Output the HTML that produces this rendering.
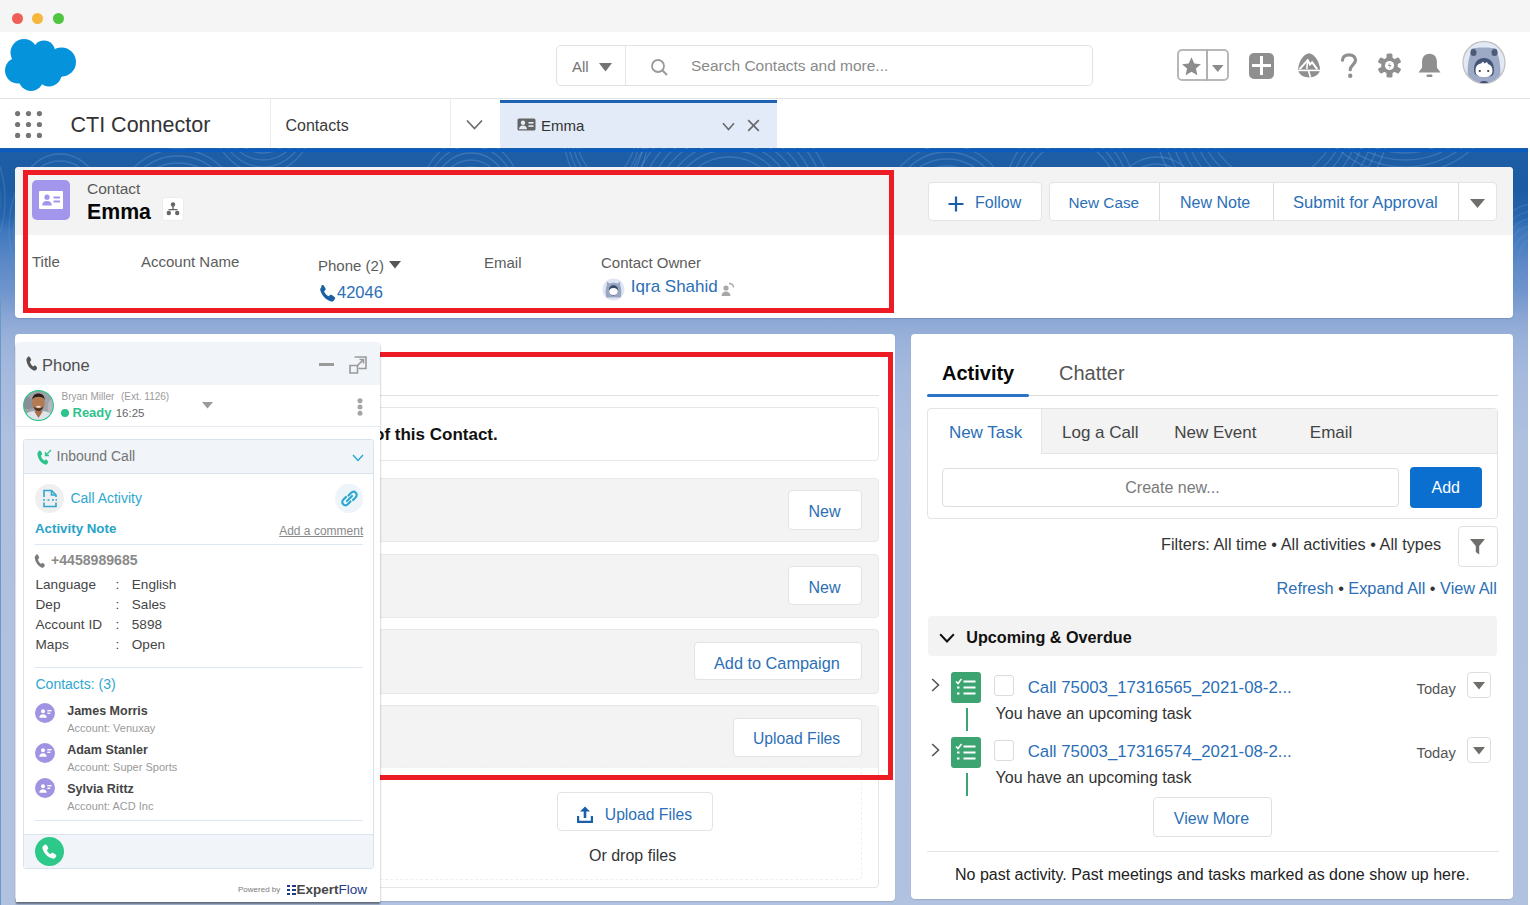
<!DOCTYPE html>
<html><head><meta charset="utf-8">
<style>
*{box-sizing:border-box;margin:0;padding:0}
html,body{width:1530px;height:905px;overflow:hidden;background:#fff}
body{position:relative;font-family:"Liberation Sans",sans-serif;color:#3e3e3c}
.a{position:absolute}
.t{position:absolute;line-height:1;white-space:nowrap}
.lk{color:#2b6fb6}
.bx{position:absolute;border:1px solid #e3e3e3;border-radius:4px;background:#fff}
</style></head><body>

<!-- window chrome -->
<div class="a" style="left:0;top:0;width:1530px;height:32px;background:#f5f5f5"></div>
<div class="a" style="left:12px;top:12.5px;width:11px;height:11px;border-radius:50%;background:#ef5f57"></div>
<div class="a" style="left:32px;top:12.5px;width:11px;height:11px;border-radius:50%;background:#f6b73b"></div>
<div class="a" style="left:52.5px;top:12.5px;width:11px;height:11px;border-radius:50%;background:#4ec640"></div>

<!-- header -->
<div class="a" style="left:0;top:98px;width:1530px;height:1px;background:#e3e3e3"></div>
<svg class="a" style="left:4px;top:37px" width="74" height="56" viewBox="0 0 74 56">
 <g fill="#0593dc">
  <circle cx="20" cy="15.5" r="13.5"/><circle cx="40" cy="14.5" r="11"/><circle cx="57.5" cy="25" r="14.5"/>
  <circle cx="14" cy="33.5" r="13"/><circle cx="27" cy="41.5" r="12.5"/><circle cx="45" cy="37" r="12.5"/>
  <rect x="14" y="18" width="44" height="22"/>
 </g>
</svg>

<!-- search -->
<div class="bx" style="left:556px;top:45px;width:537px;height:41px;border-color:#e2e2e2;border-radius:5px"></div>
<div class="a" style="left:625px;top:46px;width:1px;height:39px;background:#e5e5e5"></div>
<div class="t" style="left:572px;top:58.5px;font-size:15px;color:#747474">All</div>
<svg class="a" style="left:599px;top:63px" width="13" height="9"><path d="M0 0H13L6.5 8.5Z" fill="#747474"/></svg>
<svg class="a" style="left:650px;top:58px" width="19" height="19" viewBox="0 0 19 19"><circle cx="8" cy="8" r="6" fill="none" stroke="#9a9a9a" stroke-width="1.8"/><path d="M12.5 12.5L17 17" stroke="#9a9a9a" stroke-width="2"/></svg>
<div class="t" style="left:691px;top:58.2px;font-size:15.5px;color:#8a8a8a">Search Contacts and more...</div>

<!-- header icons -->
<div class="bx" style="left:1177px;top:49px;width:52px;height:32px;border:2px solid #b8b8b8;border-radius:5px;background:#fff"></div>
<div class="a" style="left:1205.5px;top:49px;width:2px;height:32px;background:#b0b0b0"></div>
<svg class="a" style="left:1181px;top:55.5px" width="21" height="21" viewBox="0 0 24 24"><path d="M12 1.5l3.2 7 7.6.8-5.7 5.1 1.6 7.5L12 18l-6.7 3.9 1.6-7.5L1.2 9.3l7.6-.8z" fill="#8c8c8c"/></svg>
<svg class="a" style="left:1212px;top:65px" width="12" height="8"><path d="M0 0H11.5L5.75 7Z" fill="#8c8c8c"/></svg>
<div class="a" style="left:1248.5px;top:52.5px;width:25.5px;height:26px;border-radius:5px;background:#8f8f8f"></div>
<div class="a" style="left:1260px;top:56px;width:2.5px;height:19px;background:#fff"></div>
<div class="a" style="left:1252px;top:64.3px;width:19px;height:2.5px;background:#fff"></div>
<svg class="a" style="left:1297px;top:53px" width="24" height="25" viewBox="0 0 24 25">
 <path d="M12 0.3C6 1.5 1.8 8 1 17.2 2.5 22 7 24.4 12 24.4S21.5 22 23.2 17.2C22.2 8 18 1.5 12 0.3Z" fill="#8f8f8f"/>
 <path d="M2.6 16.2L10.7 7.2 13 11.5 15.1 9.3 20.2 16.2" fill="none" stroke="#fff" stroke-width="2"/>
 <path d="M10.7 7.2L9.8 16" stroke="#fff" stroke-width="1.6"/>
 <path d="M0 17.4H24" stroke="#fff" stroke-width="1.6"/><path d="M11.5 17.8L13.5 24.5" stroke="#fff" stroke-width="1.6" fill="none"/>
</svg>
<svg class="a" style="left:1340px;top:53px" width="18" height="26" viewBox="0 0 18 26"><path d="M2.5 7.2C2.5 3.8 5.3 1.8 9 1.8s6.5 2.2 6.5 5.4c0 4.3-5.3 5-5.3 9.5" fill="none" stroke="#8f8f8f" stroke-width="3.2" stroke-linecap="round"/><circle cx="10.2" cy="22.8" r="2.2" fill="#8f8f8f"/></svg>
<svg class="a" style="left:1378px;top:53px" width="23" height="25" viewBox="0 0 23 25">
 <g fill="#8f8f8f" transform="translate(11.5 12.5)">
  <circle r="8.3"/>
  <rect x="-3" y="-12" width="6" height="6" rx="1.5"/>
  <rect x="-3" y="-12" width="6" height="6" rx="1.5" transform="rotate(60)"/>
  <rect x="-3" y="-12" width="6" height="6" rx="1.5" transform="rotate(120)"/>
  <rect x="-3" y="-12" width="6" height="6" rx="1.5" transform="rotate(180)"/>
  <rect x="-3" y="-12" width="6" height="6" rx="1.5" transform="rotate(240)"/>
  <rect x="-3" y="-12" width="6" height="6" rx="1.5" transform="rotate(300)"/>
 </g>
 <circle cx="11.5" cy="12.5" r="4.6" fill="#fff"/>
 <path d="M12.5 9L9.8 13H12L10.8 16.2 13.5 12H11.3Z" fill="#8f8f8f"/>
</svg>
<svg class="a" style="left:1418px;top:53px" width="23" height="25" viewBox="0 0 23 25"><path d="M11.5 0.8c-4.8 0-7.4 3.6-7.4 8v5.8L0.5 19.5h22l-3.6-4.9V8.8c0-4.4-2.6-8-7.4-8z" fill="#8f8f8f"/><rect x="8.5" y="21.5" width="6" height="2.5" rx="1.2" fill="#8f8f8f"/></svg>
<svg class="a" style="left:1462px;top:40px" width="44" height="45" viewBox="0 0 44 45">
 <defs><clipPath id="tav"><circle cx="22" cy="22.5" r="20.5"/></clipPath></defs>
 <circle cx="22" cy="22.5" r="21" fill="#e3e9f4" stroke="#c4c4c8" stroke-width="1.4"/>
 <g clip-path="url(#tav)">
 <path d="M7 45C5 36 5 24 8 15L9 9C13 7 31 7 35 9L36 15C39 24 39 36 37 45Z" fill="#9daac6"/>
 <ellipse cx="11.5" cy="12.5" rx="3" ry="3.6" fill="#4d5a78"/><ellipse cx="32.5" cy="12.5" rx="3" ry="3.6" fill="#4d5a78"/>
 <path d="M12 30C12 22 16 18 22 18S32 22 32 30 28 36 22 36 12 36 12 30Z" fill="#44557a"/>
 <path d="M13.5 31C13.5 26 16 24 19 23.5L21 21.5 22.5 23.5 25 22 26 24C29 25 30.5 27 30.5 31 30.5 35 27 37 22 37S13.5 35 13.5 31Z" fill="#fff"/>
 <circle cx="17.8" cy="31" r="1.1" fill="#333"/><circle cx="26.2" cy="31" r="1.1" fill="#333"/>
 <ellipse cx="22" cy="44" rx="4.5" ry="3" fill="#3e4a66"/>
 </g>
</svg>

<!-- nav bar -->
<div class="a" style="left:15px;top:111px;width:27px;height:27px">
 <svg width="27" height="27" viewBox="0 0 27 27" fill="#757575">
  <circle cx="2.6" cy="2.6" r="2.6"/><circle cx="13.5" cy="2.6" r="2.6"/><circle cx="24.4" cy="2.6" r="2.6"/>
  <circle cx="2.6" cy="13.5" r="2.6"/><circle cx="13.5" cy="13.5" r="2.6"/><circle cx="24.4" cy="13.5" r="2.6"/>
  <circle cx="2.6" cy="24.4" r="2.6"/><circle cx="13.5" cy="24.4" r="2.6"/><circle cx="24.4" cy="24.4" r="2.6"/>
 </svg>
</div>
<div class="t" style="left:70.5px;top:114.8px;font-size:21.5px;color:#333">CTI Connector</div>
<div class="a" style="left:269.5px;top:99px;width:1px;height:48px;background:#ececec"></div>
<div class="t" style="left:285.5px;top:117.5px;font-size:16px;color:#3a3a3a">Contacts</div>
<div class="a" style="left:449.5px;top:99px;width:1px;height:48px;background:#ececec"></div>
<svg class="a" style="left:466px;top:119px" width="17" height="12"><path d="M1 1.5L8.5 9.5 16 1.5" fill="none" stroke="#6f6f6f" stroke-width="1.8"/></svg>
<div class="a" style="left:500px;top:100px;width:277px;height:48px;background:#e2ebf7;border-top:3px solid #1f63b0"></div>
<svg class="a" style="left:516.5px;top:117.5px" width="19" height="13" viewBox="0 0 19 13"><rect x="0.5" y="0.5" width="18" height="12" rx="1.5" fill="#646464"/><circle cx="6" cy="4.8" r="2.2" fill="#e2ebf7"/><path d="M2 11.2c0-2.5 1.8-3.8 4-3.8s4 1.3 4 3.8z" fill="#e2ebf7"/><rect x="11.5" y="4" width="5" height="1.6" fill="#e2ebf7"/><rect x="11.5" y="7.3" width="5" height="1.6" fill="#e2ebf7"/></svg>
<div class="t" style="left:541px;top:118.3px;font-size:15px;color:#333">Emma</div>
<svg class="a" style="left:721.5px;top:121.5px" width="13" height="9"><path d="M1 1.2L6.5 7.5 12 1.2" fill="none" stroke="#6a6a6a" stroke-width="1.6"/></svg>
<svg class="a" style="left:746.5px;top:118.5px" width="13" height="13"><path d="M1.2 1.2L11.8 11.8M11.8 1.2L1.2 11.8" stroke="#6a6a6a" stroke-width="1.7"/></svg>

<!-- BACKGROUND -->
<div class="a" style="left:0;top:148px;width:1528px;height:757px;background:linear-gradient(to bottom,#1d5ea6 0px,#1c5ca3 40px,#2766ad 70px,#3f78bd 83px,#5b88c6 113px,#6f95cc 143px,#8da8d6 172px,#9ab2da 192px,#a6bade 229px,#b0c1e0 299px,#b1c2e0 757px)"></div>
<div class="a" style="left:0;top:300px;width:1px;height:605px;background:#6a98c8"></div>
<svg class="a" style="left:0;top:148px" width="1528" height="190" viewBox="0 148 1528 190"><defs><linearGradient id="fadeg" x1="0" y1="0" x2="0" y2="1"><stop offset="0" stop-color="#fff" stop-opacity="1"/><stop offset="1" stop-color="#fff" stop-opacity="0"/></linearGradient><mask id="fm"><rect x="0" y="148" width="1528" height="190" fill="url(#fadeg)"/></mask></defs><g fill="none" stroke="#8fb4e6" stroke-opacity="0.28" stroke-width="1.3" mask="url(#fm)"><ellipse cx="-47" cy="200" rx="23" ry="34"/><ellipse cx="-47" cy="200" rx="28" ry="41"/><ellipse cx="-47" cy="200" rx="33" ry="48"/><ellipse cx="-47" cy="200" rx="37" ry="55"/><ellipse cx="-47" cy="200" rx="42" ry="62"/><ellipse cx="-47" cy="200" rx="47" ry="69"/><ellipse cx="-47" cy="200" rx="52" ry="76"/><ellipse cx="60" cy="230" rx="32" ry="48"/><ellipse cx="60" cy="230" rx="37" ry="55"/><ellipse cx="60" cy="230" rx="42" ry="62"/><ellipse cx="60" cy="230" rx="46" ry="69"/><ellipse cx="60" cy="230" rx="51" ry="76"/><ellipse cx="178" cy="230" rx="27" ry="32"/><ellipse cx="178" cy="230" rx="33" ry="39"/><ellipse cx="178" cy="230" rx="39" ry="46"/><ellipse cx="178" cy="230" rx="45" ry="53"/><ellipse cx="178" cy="230" rx="51" ry="60"/><ellipse cx="178" cy="230" rx="57" ry="67"/><ellipse cx="178" cy="230" rx="63" ry="74"/><ellipse cx="178" cy="230" rx="69" ry="81"/><ellipse cx="263" cy="90" rx="35" ry="49"/><ellipse cx="263" cy="90" rx="39" ry="56"/><ellipse cx="263" cy="90" rx="44" ry="63"/><ellipse cx="263" cy="90" rx="49" ry="70"/><ellipse cx="263" cy="90" rx="54" ry="77"/><ellipse cx="263" cy="90" rx="59" ry="84"/><ellipse cx="358" cy="90" rx="20" ry="25"/><ellipse cx="358" cy="90" rx="25" ry="32"/><ellipse cx="358" cy="90" rx="31" ry="39"/><ellipse cx="358" cy="90" rx="36" ry="46"/><ellipse cx="471" cy="200" rx="22" ry="26"/><ellipse cx="471" cy="200" rx="28" ry="33"/><ellipse cx="471" cy="200" rx="34" ry="40"/><ellipse cx="471" cy="200" rx="40" ry="47"/><ellipse cx="471" cy="200" rx="46" ry="54"/><ellipse cx="471" cy="200" rx="51" ry="61"/><ellipse cx="606" cy="120" rx="32" ry="58"/><ellipse cx="606" cy="120" rx="36" ry="65"/><ellipse cx="606" cy="120" rx="40" ry="72"/><ellipse cx="606" cy="120" rx="44" ry="79"/><ellipse cx="729" cy="200" rx="48" ry="43"/><ellipse cx="729" cy="200" rx="56" ry="50"/><ellipse cx="729" cy="200" rx="63" ry="57"/><ellipse cx="729" cy="200" rx="71" ry="64"/><ellipse cx="729" cy="200" rx="79" ry="71"/><ellipse cx="729" cy="200" rx="87" ry="78"/><ellipse cx="729" cy="200" rx="95" ry="85"/><ellipse cx="729" cy="200" rx="102" ry="92"/><ellipse cx="840" cy="260" rx="25" ry="34"/><ellipse cx="840" cy="260" rx="30" ry="41"/><ellipse cx="840" cy="260" rx="35" ry="48"/><ellipse cx="840" cy="260" rx="41" ry="55"/><ellipse cx="840" cy="260" rx="46" ry="62"/><ellipse cx="840" cy="260" rx="51" ry="69"/><ellipse cx="947" cy="230" rx="35" ry="43"/><ellipse cx="947" cy="230" rx="41" ry="50"/><ellipse cx="947" cy="230" rx="47" ry="57"/><ellipse cx="947" cy="230" rx="53" ry="64"/><ellipse cx="947" cy="230" rx="58" ry="71"/><ellipse cx="947" cy="230" rx="64" ry="78"/><ellipse cx="947" cy="230" rx="70" ry="85"/><ellipse cx="1070" cy="200" rx="48" ry="58"/><ellipse cx="1070" cy="200" rx="54" ry="65"/><ellipse cx="1070" cy="200" rx="60" ry="72"/><ellipse cx="1070" cy="200" rx="66" ry="79"/><ellipse cx="1157" cy="200" rx="22" ry="22"/><ellipse cx="1157" cy="200" rx="29" ry="29"/><ellipse cx="1157" cy="200" rx="36" ry="36"/><ellipse cx="1157" cy="200" rx="43" ry="43"/><ellipse cx="1272" cy="120" rx="64" ry="60"/><ellipse cx="1272" cy="120" rx="72" ry="67"/><ellipse cx="1272" cy="120" rx="79" ry="74"/><ellipse cx="1272" cy="120" rx="87" ry="81"/><ellipse cx="1272" cy="120" rx="94" ry="88"/><ellipse cx="1272" cy="120" rx="102" ry="95"/><ellipse cx="1272" cy="120" rx="109" ry="102"/><ellipse cx="1272" cy="120" rx="117" ry="109"/><ellipse cx="1405" cy="90" rx="55" ry="49"/><ellipse cx="1405" cy="90" rx="62" ry="56"/><ellipse cx="1405" cy="90" rx="70" ry="63"/><ellipse cx="1405" cy="90" rx="78" ry="70"/><ellipse cx="1405" cy="90" rx="86" ry="77"/><ellipse cx="1405" cy="90" rx="94" ry="84"/><ellipse cx="1535" cy="260" rx="17" ry="21"/><ellipse cx="1535" cy="260" rx="23" ry="28"/><ellipse cx="1535" cy="260" rx="29" ry="35"/><ellipse cx="1535" cy="260" rx="34" ry="42"/><ellipse cx="1535" cy="260" rx="40" ry="49"/><ellipse cx="1535" cy="260" rx="46" ry="56"/></g></svg>
<div class="a" style="left:0;top:148.5px;width:1528px;height:3px;background:#0b5cbf"></div>


<!-- HEADER CARD -->
<div class="a" style="left:15px;top:167px;width:1498px;height:151px;background:#fff;border-radius:4px;overflow:hidden;box-shadow:0 1px 1px rgba(0,0,0,.12)">
 <div class="a" style="left:0;top:0;width:1498px;height:68px;background:#f3f3f3"></div>
</div>
<div class="a" style="left:32px;top:180px;width:38px;height:40px;border-radius:5px;background:#a196ec"></div>
<svg class="a" style="left:39px;top:190.5px" width="24" height="18" viewBox="0 0 24 18"><rect width="24" height="18" rx="1" fill="#fff"/><circle cx="8" cy="6.2" r="2.6" fill="#a196ec"/><path d="M3.2 14.5c0-3.2 2.2-4.6 4.8-4.6s4.8 1.4 4.8 4.6z" fill="#a196ec"/><rect x="14.5" y="5.5" width="6.5" height="2" fill="#a196ec"/><rect x="14.5" y="9.5" width="6.5" height="2" fill="#a196ec"/></svg>
<div class="t" style="left:87px;top:181.3px;font-size:15.5px;color:#5a5a5a">Contact</div>
<div class="t" style="left:87px;top:201.5px;font-size:21.3px;font-weight:bold;color:#080707">Emma</div>
<div class="a" style="left:162px;top:197px;width:22px;height:24px;border-radius:3px;background:#fff;border:1px solid #ededed"></div>
<svg class="a" style="left:166px;top:202px" width="14" height="14" viewBox="0 0 14 14" fill="#666"><circle cx="7" cy="2.5" r="2.2"/><rect x="6.3" y="4" width="1.4" height="4"/><rect x="2.5" y="7" width="9" height="1.3"/><circle cx="2.8" cy="11" r="2.2"/><circle cx="11.2" cy="11" r="2.2"/></svg>

<div class="t" style="left:32px;top:254.3px;font-size:15px;color:#5c5c5c">Title</div>
<div class="t" style="left:141px;top:254.3px;font-size:15px;color:#5c5c5c">Account Name</div>
<div class="t" style="left:318px;top:257.8px;font-size:15px;color:#5c5c5c">Phone (2)</div>
<svg class="a" style="left:388.5px;top:261px" width="12" height="8"><path d="M0 0H12L6 7.5Z" fill="#555"/></svg>
<svg class="a" style="left:318px;top:283.5px" width="18" height="18" viewBox="0 0 18 18"><path d="M3.6 1.2c.8-.5 1.7-.3 2.2.4l1.6 2.6c.5.8.3 1.7-.4 2.2l-1 .8c.9 2.1 2.6 4 4.8 5.1l.9-1c.6-.6 1.5-.7 2.2-.2l2.6 1.8c.7.5.9 1.5.4 2.2l-1 1.5c-.6.9-1.7 1.3-2.7 1-5.4-1.7-9.4-6-10.9-11.3-.3-1 .1-2.1.9-2.7z" fill="#1c5fa4"/></svg>
<div class="t" style="left:337px;top:283.5px;font-size:16.5px;color:#2b6fb6">42046</div>
<div class="t" style="left:484px;top:254.8px;font-size:15px;color:#5c5c5c">Email</div>
<div class="t" style="left:601px;top:254.8px;font-size:15px;color:#5c5c5c">Contact Owner</div>
<svg class="a" style="left:602px;top:278px" width="23" height="23" viewBox="0 0 44 45">
 <circle cx="22" cy="22.5" r="21.5" fill="#dfe6f3"/>
 <path d="M8 38C6 30 6 20 9 14L9 7 14 11C18 9 26 9 30 11L35 7 35 14C38 20 38 30 36 38Z" fill="#98a6c2"/>
 <path d="M13 24C13 17 17 14 22 14S31 17 31 24 28 34 22 34 13 31 13 24Z" fill="#3b4a6b"/>
 <ellipse cx="22" cy="26.5" rx="8.5" ry="7" fill="#fff"/>
</svg>
<div class="t" style="left:630.8px;top:278.4px;font-size:17px;color:#2b6fb6">Iqra Shahid</div>
<svg class="a" style="left:720px;top:281px" width="15" height="16" viewBox="0 0 15 16" fill="#a8a8a8"><circle cx="6" cy="7" r="2.6"/><path d="M1.5 15c0-3 2-4.5 4.5-4.5s4.5 1.5 4.5 4.5z"/><path d="M9 2.5c2.5 0 4.5 1.5 4.5 4" fill="none" stroke="#a8a8a8" stroke-width="1.3"/></svg>

<!-- action buttons -->
<div class="bx" style="left:927.5px;top:182px;width:114px;height:39px"></div>
<svg class="a" style="left:947.5px;top:196px" width="16" height="16"><path d="M8 0.5V15.5M0.5 8H15.5" stroke="#1b5fa8" stroke-width="2.2"/></svg>
<div class="t" style="left:975px;top:195.1px;font-size:16px" ><span class="lk">Follow</span></div>
<div class="bx" style="left:1049px;top:182px;width:448px;height:39px"></div>
<div class="a" style="left:1159px;top:183px;width:1px;height:37px;background:#dddbda"></div>
<div class="a" style="left:1273px;top:183px;width:1px;height:37px;background:#dddbda"></div>
<div class="a" style="left:1458px;top:183px;width:1px;height:37px;background:#dddbda"></div>
<div class="t lk" style="left:1068.5px;top:195.1px;font-size:15.3px">New Case</div>
<div class="t lk" style="left:1180px;top:195.1px;font-size:16px">New Note</div>
<div class="t lk" style="left:1293px;top:195.1px;font-size:16.6px">Submit for Approval</div>
<svg class="a" style="left:1470px;top:198.5px" width="15" height="9"><path d="M0 0H15L7.5 9Z" fill="#706e6b"/></svg>

<!-- red highlight 1 -->
<div class="a" style="left:23px;top:170px;width:871px;height:142.5px;border:5px solid #ed1c24"></div>


<!-- CENTER CARD -->
<div class="a" style="left:15px;top:333.5px;width:879.5px;height:567.5px;background:#fff;border-radius:4px;box-shadow:0 1px 1px rgba(0,0,0,.12)"></div>
<div class="a" style="left:30px;top:395px;width:849px;height:1px;background:#e0e0e0"></div>
<div class="bx" style="left:30px;top:407px;width:849px;height:54px;border-color:#e7e7e7"></div>
<div class="t" style="left:374px;top:426.3px;font-size:17px;font-weight:bold;color:#111">of this Contact.</div>

<div class="bx" style="left:30px;top:478px;width:849px;height:64px;background:#f3f3f3;border-color:#e8e8e8"></div>
<div class="bx" style="left:788px;top:490px;width:74px;height:40px"></div>
<div class="t lk" style="left:808.5px;top:504.2px;font-size:16px">New</div>

<div class="bx" style="left:30px;top:553.5px;width:849px;height:64.5px;background:#f3f3f3;border-color:#e8e8e8"></div>
<div class="bx" style="left:788px;top:565.5px;width:74px;height:39.5px"></div>
<div class="t lk" style="left:808.5px;top:579.7px;font-size:16px">New</div>

<div class="bx" style="left:30px;top:629px;width:849px;height:64.5px;background:#f3f3f3;border-color:#e8e8e8"></div>
<div class="bx" style="left:694px;top:642px;width:168px;height:38px"></div>
<div class="t lk" style="left:714px;top:655.2px;font-size:16.3px">Add to Campaign</div>

<div class="bx" style="left:30px;top:704.5px;width:849px;height:183.5px;border-color:#e6e6e6"></div>
<div class="a" style="left:31px;top:705.5px;width:847px;height:62px;background:#f3f3f3;border-radius:4px 4px 0 0"></div>
<div class="bx" style="left:733px;top:717.5px;width:129px;height:39px"></div>
<div class="t lk" style="left:753px;top:730.6px;font-size:15.7px">Upload Files</div>
<div class="a" style="left:46px;top:767px;width:816px;height:113px;border:1px dashed #f0f0f0;border-radius:4px"></div>
<div class="bx" style="left:556.5px;top:791.5px;width:156.5px;height:39px;border-color:#e3e3e3"></div>
<svg class="a" style="left:576px;top:805.5px" width="18" height="18" viewBox="0 0 18 18" fill="#1b5fa8"><path d="M9 0.5L14 5.5H10.3V12H7.7V5.5H4z"/><path d="M1 10V17H17V10H14.8V14.8H3.2V10z"/></svg>
<div class="t lk" style="left:604.8px;top:806.6px;font-size:15.7px">Upload Files</div>
<div class="t" style="left:589px;top:848.3px;font-size:16px;color:#333">Or drop files</div>

<!-- red highlight 2 -->
<div class="a" style="left:365px;top:352px;width:528px;height:428px;border:5px solid #ed1c24"></div>



<!-- RIGHT CARD -->
<div class="a" style="left:911px;top:333.5px;width:602px;height:565px;background:#fff;border-radius:4px;box-shadow:0 1px 1px rgba(0,0,0,.12)"></div>
<div class="t" style="left:942px;top:362.6px;font-size:20px;font-weight:bold;color:#080707">Activity</div>
<div class="t" style="left:1059px;top:362.6px;font-size:20px;color:#555">Chatter</div>
<div class="a" style="left:926.5px;top:395px;width:571px;height:1px;background:#dddbda"></div>
<div class="a" style="left:926.5px;top:393.5px;width:102px;height:3.5px;background:#2b72c8;border-radius:2px"></div>

<div class="bx" style="left:927px;top:407.5px;width:570.5px;height:111px;border-color:#e3e3e3"></div>
<div class="a" style="left:1041px;top:408.5px;width:455.5px;height:45.5px;background:#f3f3f3;border-bottom:1px solid #e5e5e5;border-left:1px solid #e5e5e5;border-radius:0 4px 0 0"></div>
<div class="t lk" style="left:948.9px;top:423.6px;font-size:17px">New Task</div>
<div class="t" style="left:1062px;top:423.6px;font-size:17px;color:#444">Log a Call</div>
<div class="t" style="left:1174.3px;top:423.6px;font-size:17px;color:#444">New Event</div>
<div class="t" style="left:1309.8px;top:423.6px;font-size:17px;color:#444">Email</div>
<div class="bx" style="left:942px;top:467.5px;width:457px;height:39.5px;border-color:#dedede"></div>
<div class="t" style="left:1125.3px;top:479.6px;font-size:16px;color:#7a7a7a">Create new...</div>
<div class="a" style="left:1410px;top:467px;width:72px;height:40.5px;background:#0a6fcf;border-radius:4px"></div>
<div class="t" style="left:1431.5px;top:479.8px;font-size:16px;color:#fff">Add</div>

<div class="t" style="left:1161px;top:535.8px;font-size:16.3px;color:#333">Filters: All time • All activities • All types</div>
<div class="bx" style="left:1458px;top:525.5px;width:39.5px;height:41px;border-color:#e0e0e0"></div>
<svg class="a" style="left:1470px;top:539px" width="15" height="16" viewBox="0 0 15 16"><path d="M0 0H15L9.2 7V15.5L5.8 13V7Z" fill="#706e6b"/></svg>
<div class="t" style="left:1276.6px;top:580.2px;font-size:16.3px;color:#333"><span class="lk">Refresh</span> • <span class="lk">Expand All</span> • <span class="lk">View All</span></div>

<div class="a" style="left:928px;top:616px;width:569px;height:39.5px;background:#f3f3f3;border-radius:4px"></div>
<svg class="a" style="left:939px;top:632.5px" width="16" height="10"><path d="M1.2 1.2L8 8.5 14.8 1.2" fill="none" stroke="#111" stroke-width="2"/></svg>
<div class="t" style="left:966.2px;top:628.9px;font-size:16.2px;font-weight:bold;color:#111">Upcoming &amp; Overdue</div>
<svg class="a" style="left:930.5px;top:678.3px" width="9" height="14"><path d="M1.2 1L7.5 7 1.2 13" fill="none" stroke="#555" stroke-width="1.6"/></svg>
<div class="a" style="left:951px;top:671.8px;width:30px;height:31.5px;background:#3ba471;border-radius:3px"></div>
<svg class="a" style="left:955px;top:676.8px" width="22" height="21" viewBox="0 0 22 21" fill="#fff"><path d="M1 4.5L3 6.5 6.5 2" stroke="#fff" stroke-width="1.6" fill="none"/><rect x="8.5" y="3.5" width="12" height="2"/><rect x="2" y="9.5" width="2.5" height="2"/><rect x="8.5" y="9.5" width="12" height="2"/><rect x="2" y="15.5" width="2.5" height="2"/><rect x="8.5" y="15.5" width="12" height="2"/></svg>
<div class="a" style="left:965.5px;top:707.8px;width:2px;height:23px;background:#3ba471"></div>
<div class="a" style="left:993.5px;top:674.8px;width:20px;height:21px;border:1px solid #dcdcdc;border-radius:3px;background:#fff"></div>
<div class="t lk" style="left:1027.7px;top:679.7px;font-size:16.8px">Call 75003_17316565_2021-08-2...</div>
<div class="t" style="left:995.6px;top:705.8px;font-size:16px;color:#333">You have an upcoming task</div>
<div class="t" style="left:1416.6px;top:681.5px;font-size:14.7px;color:#555">Today</div>
<div class="bx" style="left:1466.5px;top:672.3px;width:24px;height:26px;border-color:#dedede"></div>
<svg class="a" style="left:1472.5px;top:681.8px" width="12" height="8"><path d="M0 0H12L6 7.5Z" fill="#706e6b"/></svg>
<svg class="a" style="left:930.5px;top:743.0px" width="9" height="14"><path d="M1.2 1L7.5 7 1.2 13" fill="none" stroke="#555" stroke-width="1.6"/></svg>
<div class="a" style="left:951px;top:736.5px;width:30px;height:31.5px;background:#3ba471;border-radius:3px"></div>
<svg class="a" style="left:955px;top:741.5px" width="22" height="21" viewBox="0 0 22 21" fill="#fff"><path d="M1 4.5L3 6.5 6.5 2" stroke="#fff" stroke-width="1.6" fill="none"/><rect x="8.5" y="3.5" width="12" height="2"/><rect x="2" y="9.5" width="2.5" height="2"/><rect x="8.5" y="9.5" width="12" height="2"/><rect x="2" y="15.5" width="2.5" height="2"/><rect x="8.5" y="15.5" width="12" height="2"/></svg>
<div class="a" style="left:965.5px;top:772.5px;width:2px;height:23px;background:#3ba471"></div>
<div class="a" style="left:993.5px;top:739.5px;width:20px;height:21px;border:1px solid #dcdcdc;border-radius:3px;background:#fff"></div>
<div class="t lk" style="left:1027.7px;top:743.8px;font-size:16.8px">Call 75003_17316574_2021-08-2...</div>
<div class="t" style="left:995.6px;top:769.8px;font-size:16px;color:#333">You have an upcoming task</div>
<div class="t" style="left:1416.6px;top:745.6px;font-size:14.7px;color:#555">Today</div>
<div class="bx" style="left:1466.5px;top:737.0px;width:24px;height:26px;border-color:#dedede"></div>
<svg class="a" style="left:1472.5px;top:746.5px" width="12" height="8"><path d="M0 0H12L6 7.5Z" fill="#706e6b"/></svg>

<div class="bx" style="left:1153px;top:796.5px;width:118.5px;height:40px;border-color:#e0e0e0"></div>
<div class="t lk" style="left:1173.8px;top:811px;font-size:16px">View More</div>
<div class="a" style="left:927px;top:850.5px;width:572px;height:1px;background:#e3e3e3"></div>
<div class="t" style="left:955px;top:867px;font-size:16px;color:#222">No past activity. Past meetings and tasks marked as done show up here.</div>

<!-- PHONE WIDGET -->
<div class="a" style="left:15.5px;top:342px;width:364px;height:560px;background:#fff;box-shadow:0 2px 2px rgba(0,0,0,.45);border-radius:3px 3px 0 0"></div>
<div class="a" style="left:15.5px;top:342px;width:364px;height:42.7px;background:#f1f4f9;border-radius:3px 3px 0 0"></div>
<svg class="a" style="left:26px;top:356px" width="11" height="15" viewBox="0 0 11 15"><path d="M2.2 0.6c.6-.4 1.3-.2 1.6.4l1.2 2.2c.3.6.2 1.3-.3 1.7l-.8.6c.4 2 1.6 4 3.3 5.1l.7-.7c.5-.4 1.2-.5 1.7-.1l1.3 1.5c.4.5.4 1.2 0 1.7l-1 1.1c-.5.6-1.3.8-2 .5C3.6 12.8 1 9 .4 4.1.3 3.2.6 2.4 1.2 1.8z" fill="#555"/></svg>
<div class="t" style="left:42px;top:356.8px;font-size:16.5px;color:#4f4f4f">Phone</div>
<div class="a" style="left:319px;top:363px;width:14.5px;height:3px;background:#9a9a9a"></div>
<svg class="a" style="left:348.5px;top:355.5px" width="18" height="18" viewBox="0 0 18 18" fill="none" stroke="#9a9a9a" stroke-width="1.6"><path d="M5.5 1H17V12.5H9.5"/><path d="M1 9.5H8.5V17H1z"/><path d="M8.5 9.5L14.5 3.5M10.5 3.5H14.5V7.5"/></svg>
<div class="a" style="left:15.5px;top:426px;width:364px;height:1px;background:#e6ebf2"></div>

<!-- avatar -->
<svg class="a" style="left:23px;top:390px" width="31" height="31" viewBox="0 0 31 31">
 <defs><clipPath id="av"><circle cx="15.5" cy="15.5" r="14.8"/></clipPath></defs>
 <g clip-path="url(#av)">
  <rect width="31" height="31" fill="#9ea2a9"/>
  <path d="M0 8C5 4 9 9 12 14S2 20 0 18z" fill="#8a8e96"/><path d="M31 10C26 8 24 14 25 20S31 24 31 22z" fill="#b4b8be"/>
  <path d="M9 28L13 20H18L22 28z" fill="#a86e48"/>
  <ellipse cx="15.5" cy="12.8" rx="6.3" ry="8" fill="#b47a52"/>
  <path d="M9.2 10c.2-4.5 2.8-6.5 6.3-6.5s6.1 2 6.3 6.5c-.8-2-3-3.2-6.3-3.2s-5.5 1.2-6.3 3.2z" fill="#2a1d17"/>
  <path d="M10.5 16.5c1 3.5 2.8 4.5 5 4.5s4-1 5-4.5c-1.5 1.3-3 1.8-5 1.8s-3.5-.5-5-1.8z" fill="#4a3020"/>
  <ellipse cx="15.5" cy="16.8" rx="2.3" ry="1" fill="#f1dede"/>
  <path d="M0 31V26C3 23 7 21.5 11 21L15.5 28 20 21C24 21.5 28 23 31 26V31z" fill="#dfe3ea"/>
 </g>
 <circle cx="15.5" cy="15.5" r="14.9" fill="none" stroke="#2dc48b" stroke-width="1.1"/>
</svg>
<div class="t" style="left:61.5px;top:392.4px;font-size:10px;color:#9b9b9b">Bryan Miller</div>
<div class="t" style="left:121px;top:392.4px;font-size:10px;color:#9b9b9b">(Ext. 1126)</div>
<div class="a" style="left:61px;top:409px;width:8px;height:8px;border-radius:50%;background:#2dc48b"></div>
<div class="t" style="left:72.5px;top:405.5px;font-size:13px;font-weight:bold;color:#2dc48b">Ready</div>
<div class="t" style="left:115.7px;top:407.8px;font-size:11.5px;color:#666">16:25</div>
<svg class="a" style="left:202px;top:402px" width="11" height="7"><path d="M0 0H11L5.5 6.5Z" fill="#9a9a9a"/></svg>
<svg class="a" style="left:356.5px;top:397.5px" width="6" height="18" fill="#a5a5a5"><circle cx="3" cy="2.7" r="2.5"/><circle cx="3" cy="9" r="2.5"/><circle cx="3" cy="15.3" r="2.5"/></svg>

<!-- inbound call box -->
<div class="a" style="left:22.5px;top:439px;width:351.5px;height:430px;border:1px solid #d9e3ee;border-radius:3px;background:#fff"></div>
<div class="a" style="left:23.5px;top:440px;width:349.5px;height:33.5px;background:#f1f5f9;border-bottom:1px solid #d9e3ee;border-radius:3px 3px 0 0"></div>
<svg class="a" style="left:37px;top:449px" width="15" height="16" viewBox="0 0 15 16"><path d="M2.2 1.6c.6-.4 1.3-.2 1.6.4l1.2 2.2c.3.6.2 1.3-.3 1.7l-.8.6c.4 2 1.6 4 3.3 5.1l.7-.7c.5-.4 1.2-.5 1.7-.1l1.3 1.5c.4.5.4 1.2 0 1.7l-1 1.1c-.5.6-1.3.8-2 .5C3.6 13.8 1 10 .4 5.1.3 4.2.6 3.4 1.2 2.8z" fill="#2dc48b"/><path d="M14 1L8.5 6.5M8.5 3V6.5H12" stroke="#2dc48b" stroke-width="1.3" fill="none"/></svg>
<div class="t" style="left:56.5px;top:449.1px;font-size:14px;color:#737373">Inbound Call</div>
<svg class="a" style="left:352px;top:453.5px" width="12" height="8"><path d="M1 1L6 6.5 11 1" fill="none" stroke="#2ea8d0" stroke-width="1.5"/></svg>

<div class="a" style="left:35px;top:484px;width:29px;height:29px;border-radius:50%;background:#efefef"></div>
<svg class="a" style="left:41.5px;top:489px" width="16" height="19" viewBox="0 0 16 19" fill="none" stroke="#2ea8d0" stroke-width="1.6"><path d="M2 8V1.5H9.5L14 6V8"/><path d="M9.5 1.5V6H14"/><path d="M1 11H3M5.5 11H7.5M10 11H12M13.5 11H15" /><path d="M2 13.5V17.5H14V13.5"/></svg>
<div class="t" style="left:70.4px;top:490.8px;font-size:14px;color:#2ea8d0">Call Activity</div>
<div class="a" style="left:335px;top:484px;width:28px;height:28.5px;border-radius:50%;background:#edf4fa"></div>
<svg class="a" style="left:339.5px;top:489px" width="19" height="19" viewBox="0 0 19 19" fill="none" stroke="#2ea8d0" stroke-width="2.2" stroke-linecap="round"><path d="M8.5 6.5L11 4C12.5 2.5 14.5 2.5 15.8 3.7S17 7 15.5 8.5L13 11"/><path d="M10.5 12.5L8 15C6.5 16.5 4.5 16.5 3.2 15.3S2 12 3.5 10.5L6 8"/><path d="M7 12L12 7"/></svg>
<div class="t" style="left:35px;top:521.6px;font-size:13.3px;font-weight:bold;color:#26a3c9">Activity Note</div>
<div class="t" style="left:279.2px;top:524.8px;font-size:12px;color:#8a8a8a;text-decoration:underline;text-underline-offset:1px">Add a comment</div>
<div class="a" style="left:34.5px;top:544px;width:328.5px;height:1px;background:#dfe8f0"></div>

<svg class="a" style="left:33.5px;top:553.5px" width="11" height="14" viewBox="0 0 11 15"><path d="M2.2 0.6c.6-.4 1.3-.2 1.6.4l1.2 2.2c.3.6.2 1.3-.3 1.7l-.8.6c.4 2 1.6 4 3.3 5.1l.7-.7c.5-.4 1.2-.5 1.7-.1l1.3 1.5c.4.5.4 1.2 0 1.7l-1 1.1c-.5.6-1.3.8-2 .5C3.6 12.8 1 9 .4 4.1.3 3.2.6 2.4 1.2 1.8z" fill="#7b7b7b"/></svg>
<div class="t" style="left:51px;top:553.4px;font-size:14.1px;font-weight:bold;color:#8a8a8a">+4458989685</div>

<div class="t" style="left:35.5px;top:578.3px;font-size:13.6px;color:#454545">Language</div>
<div class="t" style="left:115.5px;top:578.3px;font-size:13.6px;color:#454545">:</div>
<div class="t" style="left:131.8px;top:578.3px;font-size:13.6px;color:#454545">English</div>
<div class="t" style="left:35.5px;top:598.2px;font-size:13.6px;color:#454545">Dep</div>
<div class="t" style="left:115.5px;top:598.2px;font-size:13.6px;color:#454545">:</div>
<div class="t" style="left:131.8px;top:598.2px;font-size:13.6px;color:#454545">Sales</div>
<div class="t" style="left:35.5px;top:617.8px;font-size:13.6px;color:#454545">Account ID</div>
<div class="t" style="left:115.5px;top:617.8px;font-size:13.6px;color:#454545">:</div>
<div class="t" style="left:131.8px;top:617.8px;font-size:13.6px;color:#454545">5898</div>
<div class="t" style="left:35.5px;top:637.9px;font-size:13.6px;color:#454545">Maps</div>
<div class="t" style="left:115.5px;top:637.9px;font-size:13.6px;color:#454545">:</div>
<div class="t" style="left:131.8px;top:637.9px;font-size:13.6px;color:#454545">Open</div>
<div class="a" style="left:34.5px;top:667px;width:328.5px;height:1px;background:#dfe8f0"></div>
<div class="t" style="left:35.5px;top:676.6px;font-size:14px;color:#2ea8d0">Contacts: (3)</div>
<div class="a" style="left:35px;top:703px;width:20px;height:20px;border-radius:50%;background:#a094e2"></div>
<svg class="a" style="left:38.5px;top:708.5px" width="13" height="9" viewBox="0 0 13 9" fill="#fff"><circle cx="4" cy="2.3" r="2"/><path d="M0.3 8.7c0-2.3 1.6-3.5 3.7-3.5s3.7 1.2 3.7 3.5z"/><rect x="8.3" y="1" width="4.2" height="1.4"/><rect x="8.3" y="3.6" width="3" height="1.4"/></svg>
<div class="t" style="left:67.2px;top:705.1px;font-size:12.5px;font-weight:bold;color:#444">James Morris</div>
<div class="t" style="left:67.2px;top:722.7px;font-size:11px;color:#9a9a9a">Account: Venuxay</div>
<div class="a" style="left:35px;top:742.5px;width:20px;height:20px;border-radius:50%;background:#a094e2"></div>
<svg class="a" style="left:38.5px;top:748.0px" width="13" height="9" viewBox="0 0 13 9" fill="#fff"><circle cx="4" cy="2.3" r="2"/><path d="M0.3 8.7c0-2.3 1.6-3.5 3.7-3.5s3.7 1.2 3.7 3.5z"/><rect x="8.3" y="1" width="4.2" height="1.4"/><rect x="8.3" y="3.6" width="3" height="1.4"/></svg>
<div class="t" style="left:67.2px;top:744.1px;font-size:12.5px;font-weight:bold;color:#444">Adam Stanler</div>
<div class="t" style="left:67.2px;top:761.7px;font-size:11px;color:#9a9a9a">Account: Super Sports</div>
<div class="a" style="left:35px;top:778px;width:20px;height:20px;border-radius:50%;background:#a094e2"></div>
<svg class="a" style="left:38.5px;top:783.5px" width="13" height="9" viewBox="0 0 13 9" fill="#fff"><circle cx="4" cy="2.3" r="2"/><path d="M0.3 8.7c0-2.3 1.6-3.5 3.7-3.5s3.7 1.2 3.7 3.5z"/><rect x="8.3" y="1" width="4.2" height="1.4"/><rect x="8.3" y="3.6" width="3" height="1.4"/></svg>
<div class="t" style="left:67.2px;top:783.2px;font-size:12.5px;font-weight:bold;color:#444">Sylvia Rittz</div>
<div class="t" style="left:67.2px;top:801.1px;font-size:11px;color:#9a9a9a">Account: ACD Inc</div>

<div class="a" style="left:34.5px;top:820px;width:328.5px;height:1px;background:#dfe8f0"></div>
<div class="a" style="left:23.5px;top:834px;width:349.5px;height:34px;background:#f1f4f8;border-top:1px solid #dbe4ee"></div>
<div class="a" style="left:35px;top:837px;width:29px;height:29px;border-radius:50%;background:#2dc98a"></div>
<svg class="a" style="left:42px;top:844px" width="15" height="15" viewBox="0 0 15 15"><path d="M2.8 0.8c.7-.5 1.6-.3 2 .4l1.3 2.4c.4.7.2 1.5-.4 2l-.8.6c.7 1.7 2 3.1 3.7 3.9l.7-.8c.5-.6 1.4-.7 2-.3l2.3 1.4c.7.4.9 1.3.5 2l-.9 1.3c-.5.8-1.5 1.1-2.4.9C6 13.5 1.8 9.5.5 4.5.2 3.6.5 2.6 1.3 2z" fill="#fff"/></svg>
<div class="t" style="left:238px;top:885.9px;font-size:8px;color:#7a7a7a">Powered by</div>
<svg class="a" style="left:287px;top:884.5px" width="9" height="10" viewBox="0 0 9 10" fill="#1e3b8a"><rect x="0" y="0" width="3" height="2"/><rect x="0" y="4" width="3" height="2"/><rect x="0" y="8" width="3" height="2"/><rect x="5" y="0" width="4" height="2"/><rect x="5" y="4" width="4" height="2"/><rect x="5" y="8" width="4" height="2"/></svg>
<div class="t" style="left:296.5px;top:883px;font-size:13.5px;font-weight:bold;color:#474747">Expert<span style="color:#1e3b8a;font-weight:normal">Flow</span></div>

</body></html>
